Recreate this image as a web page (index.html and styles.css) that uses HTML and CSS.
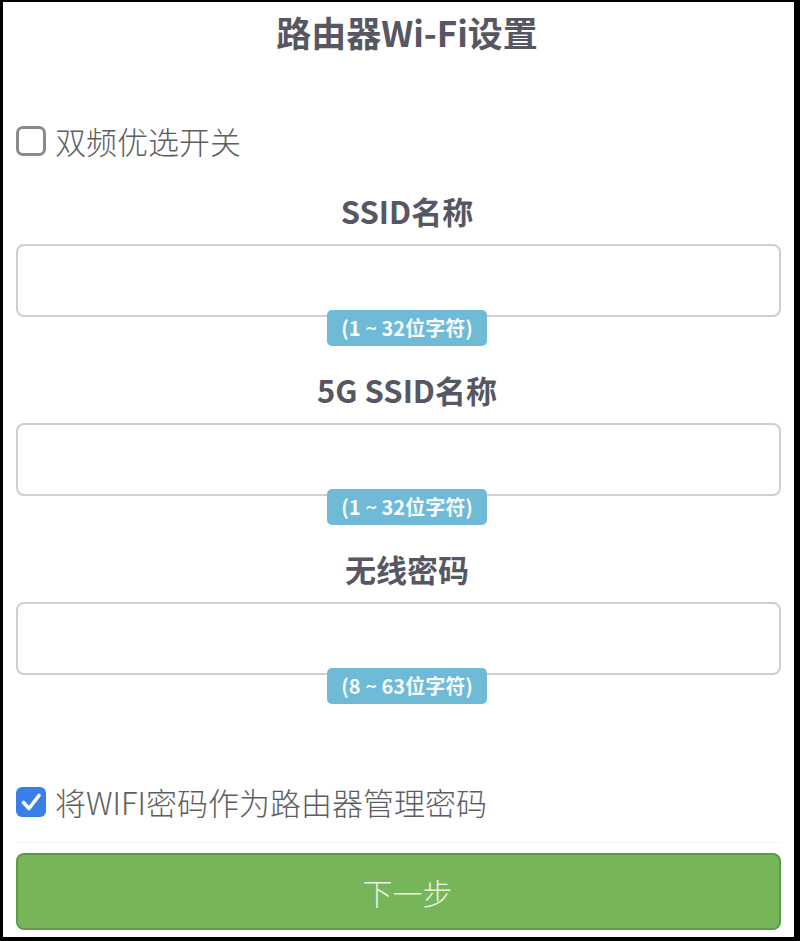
FILE: index.html
```html
<!DOCTYPE html>
<html lang="zh-CN">
<head>
<meta charset="utf-8">
<title>路由器Wi-Fi设置</title>
<link rel="stylesheet" href="styles.css">
</head>
<body>
<div class="frame">
  <h1 class="title">路由器Wi-Fi设置</h1>

  <label class="check-row dual">
    <span class="box"></span>
    <span class="check-text">双频优选开关</span>
  </label>

  <div class="field">
    <div class="field-label">SSID名称</div>
    <div class="input"></div>
    <div class="hint-row"><span class="hint">(1 ~ 32位字符)</span></div>
  </div>

  <div class="field">
    <div class="field-label">5G SSID名称</div>
    <div class="input"></div>
    <div class="hint-row"><span class="hint">(1 ~ 32位字符)</span></div>
  </div>

  <div class="field">
    <div class="field-label">无线密码</div>
    <div class="input"></div>
    <div class="hint-row"><span class="hint">(8 ~ 63位字符)</span></div>
  </div>

  <label class="check-row admin">
    <span class="box checked">
      <svg viewBox="0 0 30 30" width="30" height="30"><polyline points="7.5,15.5 13,21.5 23,8.5" fill="none" stroke="#ffffff" stroke-width="3.6" stroke-linecap="round" stroke-linejoin="round"/></svg>
    </span>
    <span class="check-text">将WIFI密码作为路由器管理密码</span>
  </label>

  <div class="divider"></div>

  <div class="button"><span class="button-text">下一步</span></div>
</div>
</body>
</html>
```

FILE: styles.css
```css
html, body {
  margin: 0;
  padding: 0;
  background: #000;
}

.frame {
  box-sizing: border-box;
  height: 941px;
  width: 800px;
  border-style: solid;
  border-color: #000;
  border-width: 2px 6px 4px 3px;
  background: #fff;
  padding: 8px 13px 0 13px;
  display: flex;
  flex-direction: column;
  font-family: "Noto Sans CJK SC", "Noto Sans", "Liberation Sans", sans-serif;
}

.title {
  margin: 0;
  font-size: 35px;
  line-height: 44px;
  font-weight: 700;
  color: #575763;
  text-align: center;
  padding-left: 17px;
}

.check-row {
  display: flex;
  align-items: center;
  height: 40px;
  gap: 9px;
}

.dual {
  margin-top: 67px;
}

.admin {
  margin-top: 54px;
}

.box {
  box-sizing: border-box;
  width: 30px;
  height: 30px;
  border: 3px solid #8a8a8a;
  border-radius: 7px;
  display: flex;
  align-items: center;
  justify-content: center;
  flex: none;
}

.box.checked {
  border: none;
  background: #3a7ee8;
  border-radius: 6px;
}

.check-text {
  font-size: 31px;
  line-height: 40px;
  color: #5e5e5e;
  font-weight: 300;
}

.field {
  display: flex;
  flex-direction: column;
  margin-bottom: 24px;
}

.dual + .field {
  margin-top: 30px;
}

.field-label {
  font-size: 31px;
  line-height: 40px;
  font-weight: 700;
  color: #575763;
  text-align: center;
  padding-left: 17px;
  margin-bottom: 13px;
}

.input {
  box-sizing: border-box;
  height: 73px;
  border: 2px solid #cfcfcf;
  border-radius: 8px;
  background: #fff;
}

.hint-row {
  display: flex;
  justify-content: center;
  padding-left: 17px;
  margin-top: -7px;
  position: relative;
}

.hint {
  display: block;
  height: 36px;
  line-height: 36px;
  padding: 0 14px;
  background: #6fbad7;
  border-radius: 5px;
  color: #f6fbfd;
  font-size: 20px;
  font-weight: 700;
  white-space: nowrap;
}

.divider {
  margin-top: 20px;
  height: 1px;
  background: #f5f5f5;
}

.button {
  box-sizing: border-box;
  margin-top: 10px;
  height: 77px;
  background: #76b658;
  border: 2px solid #5f9a4a;
  border-radius: 8px;
  display: flex;
  align-items: center;
  justify-content: center;
}

.button-text {
  padding-left: 18px;
  font-size: 30px;
  font-weight: 200;
  color: #e9f3e2;
}
```
